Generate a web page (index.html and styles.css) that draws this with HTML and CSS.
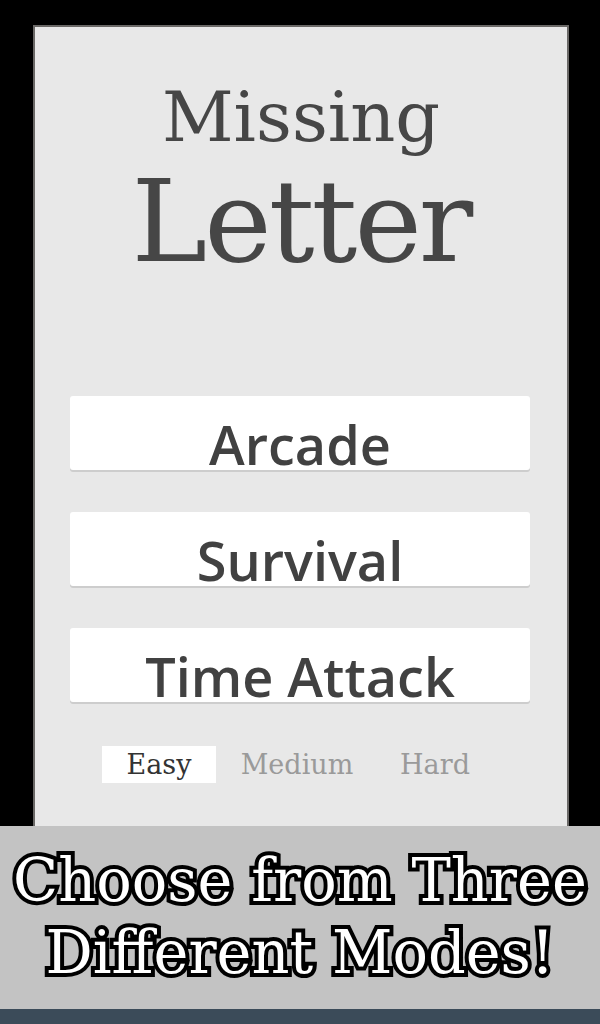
FILE: index.html
```html
<!DOCTYPE html>
<html lang="en">
  <head>
    <meta charset="UTF-8" />
    <meta name="viewport" content="width=device-width, initial-scale=1.0" />
    <title>Missing Letter</title>
    <link rel="stylesheet" href="styles.css">
  </head>
  <body>
    <div class="frame">
      <div class="screen">
        <h1 class="title">
          <span class="title-top">Missing</span>
          <span class="title-bottom">Letter</span>
        </h1>
        <ul class="modes">
          <li class="mode">Arcade</li>
          <li class="mode">Survival</li>
          <li class="mode">Time Attack</li>
        </ul>
        <ul class="levels">
          <li class="level active">Easy</li>
          <li class="level">Medium</li>
          <li class="level">Hard</li>
        </ul>
      </div>
    </div>
    <div class="banner">
      <p>Choose from Three<br>Different Modes!</p>
    </div>
    <div class="strip"></div>
  </body>
</html>
```

FILE: styles.css
```css
* {
  box-sizing: border-box;
}
body {
  margin: 0;
  background: #000;
  width: 600px;
  height: 1024px;
  overflow: hidden;
}
ul {
  list-style-type: none;
  margin: 0;
  padding: 0;
}
.frame {
  padding: 25px 0 0 33px;
}
.screen {
  width: 536px;
  height: 801px;
  background: #e8e8e8;
  border: 2px solid #6a6866;
  border-bottom: none;
  padding-top: 48px;
}
.title {
  margin: 0;
  font-family: "DejaVu Serif", serif;
  font-weight: normal;
  color: #464646;
  text-align: center;
}
.title span {
  display: block;
}
.title-top {
  font-size: 70px;
  line-height: 84px;
}
.title-bottom {
  font-size: 114px;
  line-height: 125px;
  letter-spacing: -3px;
}
.modes {
  margin: 112px 0 0 35px;
  width: 460px;
  display: grid;
  grid-template-columns: 1fr;
  row-gap: 42px;
}
.mode {
  height: 74px;
  padding-top: 22px;
  background: #fff;
  border-radius: 3px;
  box-shadow: 0 2px 0 #cdcdcd;
  font-family: "Open Sans", sans-serif;
  font-weight: 600;
  font-size: 54px;
  line-height: 52px;
  color: #414141;
  text-align: center;
}
.levels {
  margin: 44px 0 0 67px;
  display: grid;
  grid-template-columns: 114px 114px 114px;
  column-gap: 24px;
}
.level {
  height: 37px;
  font-family: "DejaVu Serif", serif;
  font-size: 27px;
  line-height: 38px;
  color: #9a9a9a;
  text-align: center;
}
.level.active {
  background: #fff;
  color: #333;
}
.banner {
  height: 183px;
  background: #c3c3c3;
  text-align: center;
}
.banner p {
  margin: 0;
  padding-top: 19px;
  font-family: "DejaVu Serif", serif;
  font-size: 59px;
  line-height: 72px;
  color: #fff;
  -webkit-text-stroke: 8px #000;
  paint-order: stroke fill;
}
.strip {
  height: 16px;
  background: #3b4b59;
}
```
